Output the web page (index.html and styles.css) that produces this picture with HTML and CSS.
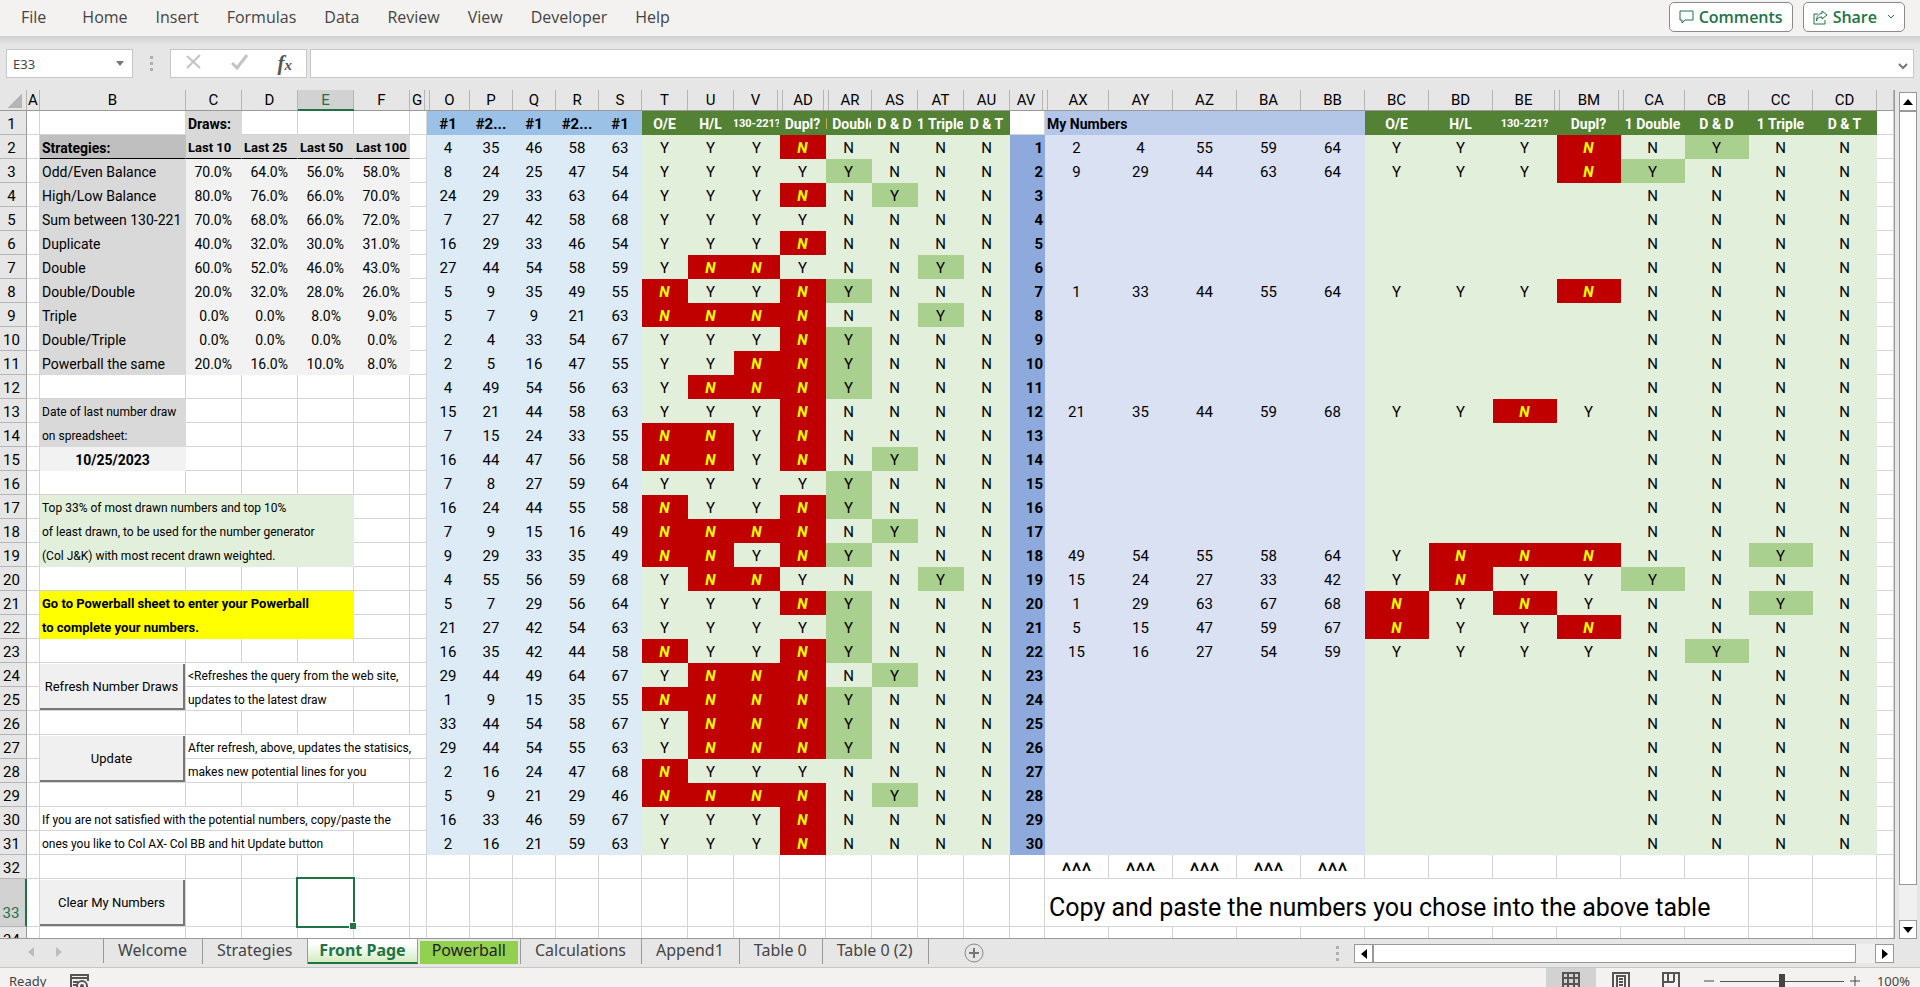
FILE: index.html
```html
<!DOCTYPE html>
<html lang="en">
<head>
  <meta charset="utf-8">
  <title>Front Page</title>
  <link rel="stylesheet" href="styles.css">
</head>
<body>
  <header class="menu-bar">
    <nav class="menu">
      <button class="menu-item menu-file">File</button>
      <button class="menu-item">Home</button>
      <button class="menu-item">Insert</button>
      <button class="menu-item">Formulas</button>
      <button class="menu-item">Data</button>
      <button class="menu-item">Review</button>
      <button class="menu-item">View</button>
      <button class="menu-item">Developer</button>
      <button class="menu-item">Help</button>
    </nav>
    <div class="menu-actions">
      <button class="action-button">
        <svg width="15" height="14" viewBox="0 0 15 14"><path d="M1 1h13v9H6l-3 3v-3H1z"/></svg>
        Comments
      </button>
      <button class="action-button">
        <svg width="15" height="15" viewBox="0 0 15 15"><path d="M5 4H1v10h11V10M9 1l5 4-5 4V7C6 7 4 8 3.500 11 3.500 6 6 3.500 9 3.500z"/></svg>
        Share
        <svg class="share-arrow" width="8" height="6" viewBox="0 0 8 6"><path d="M1 1l3 3 3-3"/></svg>
      </button>
    </div>
  </header>

  <div class="formula-bar">
    <div class="name-box">
      <input type="text" value="E33" aria-label="Name box">
      <button aria-label="Show names"><svg width="8" height="5" viewBox="0 0 8 5"><path d="M0 0h8L4 5z" fill="#777"/></svg></button>
    </div>
    <span class="dots"></span>
    <div class="formula-buttons">
      <button aria-label="Cancel"><svg width="18" height="16" viewBox="0 0 18 16"><path d="M2 2l13 12M15 1L2 14" stroke="#c3c3c3" stroke-width="2" fill="none"/></svg></button>
      <button aria-label="Enter"><svg width="18" height="16" viewBox="0 0 18 16"><path d="M1 9l5 5L16 1" stroke="#c3c3c3" stroke-width="3" fill="none"/></svg></button>
      <button class="fx" aria-label="Insert function"><i>f</i><i class="fx-small">x</i></button>
    </div>
    <div class="formula-input">
      <input type="text" aria-label="Formula bar">
      <button aria-label="Expand formula bar"><svg width="10" height="7" viewBox="0 0 10 7"><path d="M1 1l4 4 4-4" stroke="#777" stroke-width="2" fill="none"/></svg></button>
    </div>
  </div>

  <main class="workspace">
    <div class="sheet">
      <table class="grid" id="grid"></table>
    </div>
    <div class="scroll-v">
      <button class="scroll-button" aria-label="Scroll up"><svg width="10" height="6" viewBox="0 0 10 6"><path d="M5 0l5 6H0z"/></svg></button>
      <div class="scroll-thumb"></div>
      <div class="scroll-space"></div>
      <button class="scroll-button" aria-label="Scroll down"><svg width="10" height="6" viewBox="0 0 10 6"><path d="M0 0h10L5 6z"/></svg></button>
    </div>
  </main>

  <div class="tab-bar">
    <div class="tab-arrows">
      <button aria-label="Previous sheet"><svg width="6" height="10" viewBox="0 0 6 10"><path d="M6 0v10L0 5z" fill="#bdbdbd"/></svg></button>
      <button aria-label="Next sheet"><svg width="6" height="10" viewBox="0 0 6 10"><path d="M0 0v10l6-5z" fill="#bdbdbd"/></svg></button>
    </div>
    <div class="tabs">
      <button class="tab">Welcome</button>
      <button class="tab">Strategies</button>
      <button class="tab tab-active">Front Page</button>
      <button class="tab tab-green"><span>Powerball</span></button>
      <button class="tab">Calculations</button>
      <button class="tab">Append1</button>
      <button class="tab">Table 0</button>
      <button class="tab">Table 0 (2)</button>
    </div>
    <button class="add-sheet" aria-label="New sheet"><svg width="22" height="22" viewBox="0 0 22 22"><circle cx="11" cy="11" r="9" fill="none" stroke="#888"/><path d="M11 6v10M6 11h10" stroke="#777" stroke-width="2"/></svg></button>
    <span class="dots dots-scroll"></span>
    <div class="scroll-h">
      <button class="scroll-button" aria-label="Scroll left"><svg width="6" height="10" viewBox="0 0 6 10"><path d="M6 0v10L0 5z"/></svg></button>
      <div class="scroll-thumb"></div>
      <div class="scroll-space"></div>
      <button class="scroll-button" aria-label="Scroll right"><svg width="6" height="10" viewBox="0 0 6 10"><path d="M0 0v10l6-5z"/></svg></button>
    </div>
  </div>

  <footer class="status-bar">
    <span class="status-ready">Ready</span>
    <svg class="macro-icon" width="19" height="18" viewBox="0 0 19 18"><path d="M1 17V1h17v6M1 4h17M3 8h5M3 11h4M3 14h4" fill="none" stroke="#555" stroke-width="2"/><circle cx="12" cy="12" r="5" fill="#f3f2f1" stroke="#555" stroke-width="2"/><circle cx="12" cy="12" r="2" fill="#555"/></svg>
    <div class="views">
      <button class="view view-active" aria-label="Normal"><svg width="18" height="18" viewBox="0 0 18 18"><path d="M1 1h16v16H1zM6 1v16M12 1v16M1 6h16M1 12h16" fill="none" stroke="#555" stroke-width="2"/></svg></button>
      <button class="view" aria-label="Page layout"><svg width="18" height="18" viewBox="0 0 18 18"><path d="M1 1h16v16H1zM5 4h8v12H5zM7 7h4M7 10h4M7 13h4" fill="none" stroke="#555" stroke-width="2"/></svg></button>
      <button class="view" aria-label="Page break preview"><svg width="18" height="18" viewBox="0 0 18 18"><path d="M1 17V1h16v16M6 1v9M12 1v9M1 10h11" fill="none" stroke="#555" stroke-width="2"/></svg></button>
    </div>
    <div class="zoom">
      <button aria-label="Zoom out"><svg width="10" height="10" viewBox="0 0 10 10"><path d="M0 5h10" stroke="#444"/></svg></button>
      <input type="range" min="10" max="190" value="100" aria-label="Zoom">
      <button aria-label="Zoom in"><svg width="10" height="10" viewBox="0 0 10 10"><path d="M0 5h10M5 0v10" stroke="#444"/></svg></button>
    </div>
    <span class="zoom-value">100%</span>
  </footer>
  <script src="script.js"></script>
</body>
</html>
```

FILE: styles.css
```css
* {
  box-sizing: border-box;
}

body {
  margin: 0;
  height: 100vh;
  display: flex;
  flex-direction: column;
  overflow: hidden;
  background-color: #e6e6e6;
  color: #444;
  font-family: "Noto Sans", sans-serif;
  font-size: 16px;
}

button, input {
  margin: 0;
  padding: 0;
  border: none;
  background: none;
  color: inherit;
  font-family: inherit;
  font-size: inherit;
}

/* Menu bar */
.menu-bar {
  display: flex;
  justify-content: space-between;
  flex: 0 0 36px;
  padding-right: 15px;
  background-color: #f3f2f1;
}

.menu {
  display: flex;
  padding-left: 7px;
}

.menu-item {
  padding: 0 14px 2px;
  font-family: "Open Sans", sans-serif;
}

.menu-file {
  margin-right: 8px;
}

.menu-actions {
  display: flex;
  gap: 10px;
  padding: 2px 0 4px;
}

.action-button {
  display: flex;
  align-items: center;
  gap: 5px;
  padding: 0 9px;
  border: 1px solid #8a8a8a;
  border-radius: 5px;
  background-color: #fff;
  color: #217346;
  font-weight: 600;
  font-family: "Open Sans", sans-serif;
}

.action-button svg {
  fill: none;
  stroke: #217346;
}

.share-arrow {
  margin-left: 5px;
}

/* Formula bar */
.formula-bar {
  display: flex;
  flex: 0 0 53px;
  padding: 13px 6px 12px;
  background: linear-gradient(#cfcfcf, #e6e6e6 9px);
}

.name-box {
  display: flex;
  width: 127px;
  border: 1px solid #c6c6c6;
  background-color: #fff;
}

.name-box input {
  flex: 1;
  min-width: 0;
  padding-left: 6px;
  font-size: 13px;
}

.name-box button {
  display: flex;
  align-items: center;
  padding: 0 8px;
}

.dots {
  width: 3px;
  height: 15px;
  margin: 7px 17px;
  background: repeating-linear-gradient(#b0b0b0 0 3px, transparent 3px 6px);
}

.formula-buttons {
  display: flex;
  justify-content: space-around;
  align-items: center;
  width: 137px;
  border: 1px solid #c6c6c6;
  background-color: #fff;
}

.fx {
  color: #555;
  font-family: "Liberation Serif", serif;
  font-size: 21px;
  font-weight: bold;
  line-height: 20px;
}

.fx-small {
  font-size: 15px;
}

.formula-input {
  display: flex;
  flex: 1;
  margin-left: 3px;
  border: 1px solid #c6c6c6;
  background-color: #fff;
}

.formula-input input {
  flex: 1;
}

.formula-input button {
  padding: 0 5px;
}

/* Sheet */
.workspace {
  display: flex;
  flex: 1;
  min-height: 0;
}

.sheet {
  flex: 1;
  overflow: hidden;
  border-right: 1px solid #999;
  border-bottom: 1px solid #999;
}

.grid {
  width: 100%;
  table-layout: fixed;
  border-collapse: separate;
  border-spacing: 0;
  background-color: #fff;
  color: #000;
  font-family: Roboto, "Liberation Sans", sans-serif;
  font-size: 15px;
  line-height: 18px;
}

.grid th, .grid td {
  height: 24px;
  padding: 2px 2px 0;
  border-right: 1px solid #d4d4d4;
  border-bottom: 1px solid #d4d4d4;
  text-align: left;
  font-weight: normal;
  white-space: nowrap;
}

.grid td {
  font-size: 14px;
}

.grid thead th {
  height: 21px;
  padding: 0;
  border-right: none;
  border-bottom: 1px solid #999;
  background-color: #e6e6e6;
  text-align: center;
}

.grid thead div {
  height: 20px;
  padding-top: 1px;
  border-right: 1px solid #b5b5b5;
}

.grid thead .before-hidden div {
  margin-right: 2px;
}

.grid thead .after-hidden div {
  margin-left: 2px;
  border-left: 1px solid #b5b5b5;
}

.grid thead .corner div {
  background: linear-gradient(135deg, transparent 50%, #b5b5b5 50%) 8px 4px / 14px 14px no-repeat;
}

.grid thead .selected {
  border-bottom: 2px solid #217346;
  background-color: #d2d2d2;
  color: #217346;
}

.grid thead .selected div {
  height: 19px;
}

.grid tbody th {
  padding: 2px 3px 0 0;
  border-right-color: #999;
  border-bottom-color: #b5b5b5;
  background-color: #e6e6e6;
  text-align: center;
}

.grid tbody .selected {
  border-right: 2px solid #217346;
  background-color: #d2d2d2;
  color: #217346;
}

.grid .tall th, .grid .tall td {
  height: 48px;
  padding-bottom: 4px;
  vertical-align: bottom;
}

.grid .fill {
  border-color: transparent;
}

.grid .center, .grid .pick, .grid .check, .grid .bad, .grid .good, .grid .green-head, .grid .blue-head, .grid .mine {
  font-size: 15px;
  text-align: center;
}

.grid .bold, .grid .blue-head, .grid .green-head {
  font-weight: bold;
}

/* sentences that run over several columns */
.grid .note {
  font-size: 12px;
}

.grid .loud {
  font-size: 13px;
}

.grid .tight {
  padding-right: 0;
  font-size: 13px;
}

.grid .percent {
  padding-right: 9px;
  background-color: #f2f2f2;
  text-align: right;
}

.grid .percent-short {
  padding-right: 12px;
}

.grid .gray {
  background-color: #d9d9d9;
}

.grid .dark-gray {
  background-color: #bfbfbf;
}

.grid .light-gray {
  background-color: #f2f2f2;
}

.grid .date {
  font-size: 14px;
}

.grid .underlined {
  border-bottom: 1px solid #000;
}

.grid .yellow {
  background-color: #ff0;
}

.grid .green-note {
  background-color: #e2efda;
}

.grid .blue-head {
  background-color: #9bc2e6;
}

.grid .pick {
  background-color: #ddebf7;
}

.grid .green-head {
  padding-left: 0;
  padding-right: 0;
  background-color: #548235;
  color: #fff;
  font-size: 14px;
}

.green-head div {
  display: flex;
  justify-content: center;
  overflow: hidden;
}

.grid .small-head {
  font-size: 11px;
}

.grid .check {
  background-color: #e2efda;
}

.grid .bad {
  background-color: #c00000;
  color: #ff0;
  font-weight: bold;
  font-style: italic;
}

.grid .good {
  background-color: #a9d08e;
}

.grid .line-number {
  padding-right: 1px;
  background-color: #8ea9db;
  text-align: right;
  font-size: 15px;
  font-weight: bold;
}

.grid .mine-head {
  background-color: #b4c6e7;
}

.grid .mine {
  background-color: #d9e1f2;
}

.grid .carets {
  padding-top: 11px;
  font-size: 24px;
  line-height: 12px;
}

.grid .tall .big-text {
  padding: 0 0 2px 4px;
  font-size: 25px;
  line-height: 32px;
}

.grid .button-cell, .grid .tall .button-cell {
  padding: 1px 0 0;
  vertical-align: top;
}

.sheet-button {
  display: block;
  width: 100%;
  height: 46px;
  border-right: 2px solid #777;
  border-bottom: 2px solid #777;
  background-color: #f0f0f0;
  font-size: 13px;
}

.grid .cursor {
  position: relative;
}

/* Selection frame and its fill handle */
.cursor::before {
  content: "";
  position: absolute;
  inset: -2px;
  border: 2px solid #217346;
}

.cursor::after {
  content: "";
  position: absolute;
  right: -3px;
  bottom: -3px;
  width: 6px;
  height: 6px;
  border: 1px solid #fff;
  border-right: none;
  border-bottom: none;
  background-color: #217346;
}

/* Scroll bars */
.scroll-v {
  display: flex;
  flex-direction: column;
  width: 25px;
  padding: 2px 3px 0 4px;
}

.scroll-h {
  display: flex;
  width: 540px;
  height: 19px;
}

.scroll-button {
  display: flex;
  align-items: center;
  justify-content: center;
  flex: 0 0 19px;
  border: 1px solid #999;
  background-color: #fff;
}

.scroll-thumb {
  flex: 26;
  border: 1px solid #999;
  background-color: #fff;
}

.scroll-space {
  flex: 1;
  background-color: #f0f0f0;
}

.scroll-v .scroll-thumb {
  flex: 22;
}

.scroll-v .scroll-space {
  flex: 1;
}

/* Sheet tabs */
.tab-bar {
  display: flex;
  flex: 0 0 29px;
  padding-right: 26px;
  border-bottom: 1px solid #c6c6c6;
}

.tab-arrows {
  display: flex;
  gap: 22px;
  width: 104px;
  padding-left: 28px;
  border-right: 1px solid #999;
  margin-bottom: 4px;
}

.tabs {
  display: flex;
  height: 25px;
}

.tab {
  padding: 0 15px 3px 14px;
  border-right: 1px solid #999;
  line-height: 20px;
}

.tab-active {
  padding: 0 11px 2px;
  border-bottom: 2px solid #217346;
  background: linear-gradient(#fff 20%, #d3ecc0);
  color: #217346;
  font-weight: bold;
}

.tab-green {
  padding: 2px 2px 0;
  color: #222;
}

.tab-green span {
  display: block;
  height: 23px;
  padding: 0 12px;
  background-color: #92d050;
  line-height: 18px;
}

.add-sheet {
  display: flex;
  align-items: center;
  margin-left: 34px;
}

.dots-scroll {
  margin: 7px 15px 0 auto;
}

.scroll-h {
  margin-top: 5px;
}

/* Status bar */
.status-bar {
  display: flex;
  flex: 0 0 19px;
  padding: 0 10px 0 9px;
  overflow: hidden;
  background-color: #f3f2f1;
  font-size: 13px;
  line-height: 26px;
}

.macro-icon {
  margin: 6px 0 0 24px;
}

.views {
  display: flex;
  margin-left: auto;
}

.view {
  width: 50px;
  height: 30px;
}

.view-active {
  background-color: #d2d2d2;
}

.zoom {
  display: flex;
  align-items: center;
  gap: 6px;
  height: 26px;
  margin: 0 17px 0 8px;
}

.zoom button {
  display: flex;
}

.zoom input {
  width: 124px;
  height: 14px;
  appearance: none;
  background: linear-gradient(#555, #555) center / 100% 1px no-repeat;
}

.zoom input::-webkit-slider-thumb {
  appearance: none;
  width: 6px;
  height: 14px;
  background-color: #444;
}
```

FILE: script.js
```js
const columns = [
  ['A', 13], ['B', 146], ['C', 56], ['D', 56], ['E', 56], ['F', 56], ['G', 17],
  ['O', 43], ['P', 43], ['Q', 43], ['R', 43], ['S', 43],
  ['T', 46], ['U', 46], ['V', 46], ['AD', 46], ['AR', 46], ['AS', 46], ['AT', 46], ['AU', 46],
  ['AV', 35], ['AX', 64], ['AY', 64], ['AZ', 64], ['BA', 64], ['BB', 64],
  ['BC', 64], ['BD', 64], ['BE', 64], ['BM', 64], ['CA', 64], ['CB', 64], ['CC', 64], ['CD', 64], ['', 17]
];

// columns that have hidden columns to their right
const beforeHidden = ['G', 'V', 'AD', 'AV', 'BE', 'BM'];

const strategies = [
  ['Odd/Even Balance', '70.0%', '64.0%', '56.0%', '58.0%'],
  ['High/Low Balance', '80.0%', '76.0%', '66.0%', '70.0%'],
  ['Sum between 130-221', '70.0%', '68.0%', '66.0%', '72.0%'],
  ['Duplicate', '40.0%', '32.0%', '30.0%', '31.0%'],
  ['Double', '60.0%', '52.0%', '46.0%', '43.0%'],
  ['Double/Double', '20.0%', '32.0%', '28.0%', '26.0%'],
  ['Triple', '0.0%', '0.0%', '8.0%', '9.0%'],
  ['Double/Triple', '0.0%', '0.0%', '0.0%', '0.0%'],
  ['Powerball the same', '20.0%', '16.0%', '10.0%', '8.0%']
];

const draws = [
  '4 35 46 58 63 YYYNNNNN', '8 24 25 47 54 YYYYYNNN', '24 29 33 63 64 YYYNNYNN',
  '7 27 42 58 68 YYYYNNNN', '16 29 33 46 54 YYYNNNNN', '27 44 54 58 59 YNNYNNYN',
  '5 9 35 49 55 NYYNYNNN', '5 7 9 21 63 NNNNNNYN', '2 4 33 54 67 YYYNYNNN',
  '2 5 16 47 55 YYNNYNNN', '4 49 54 56 63 YNNNYNNN', '15 21 44 58 63 YYYNNNNN',
  '7 15 24 33 55 NNYNNNNN', '16 44 47 56 58 NNYNNYNN', '7 8 27 59 64 YYYYYNNN',
  '16 24 44 55 58 NYYNYNNN', '7 9 15 16 49 NNNNNYNN', '9 29 33 35 49 NNYNYNNN',
  '4 55 56 59 68 YNNYNNYN', '5 7 29 56 64 YYYNYNNN', '21 27 42 54 63 YYYYYNNN',
  '16 35 42 44 58 NYYNYNNN', '29 44 49 64 67 YNNNNYNN', '1 9 15 35 55 NNNNYNNN',
  '33 44 54 58 67 YNNNYNNN', '29 44 54 55 63 YNNNYNNN', '2 16 24 47 68 NYYYNNNN',
  '5 9 21 29 46 NNNNNYNN', '16 33 46 59 67 YYYNNNNN', '2 16 21 59 63 YYYNNNNN'
];

const myNumbers = {
  1: '2 4 55 59 64 YYYNNYNN',
  2: '9 29 44 63 64 YYYNYNNN',
  7: '1 33 44 55 64 YYYNNNNN',
  12: '21 35 44 59 68 YYNYNNNN',
  18: '49 54 55 58 64 YNNNNNYN',
  19: '15 24 27 33 42 YNYYYNNN',
  20: '1 29 63 67 68 NYNYNNYN',
  21: '5 15 47 59 67 NYYNNNNN',
  22: '15 16 27 54 59 YYYYNYNN'
};

const checkNames = ['O/E', 'H/L', '130-221?', 'Dupl?', '1 Double', 'D &amp; D', '1 Triple', 'D &amp; T'];

const cells = {};

function put(column, row, text, style, span, rows) {
  cells[column + row] = { text, style, span: span || 1, rows: rows || 1 };
}

function putChecks(first, row, checks) {
  checks.forEach((value, i) => {
    let style = 'fill check';
    if (i < 4 && value === 'N') style = 'fill bad';
    if (i > 3 && value === 'Y') style = 'fill good';
    put(columns[first + i][0], row, value, style);
  });
}

// left panel
put('C', 1, 'Draws:', 'fill bold gray');
put('B', 2, 'Strategies:', 'fill bold dark-gray underlined');
['Last 10', 'Last 25', 'Last 50', 'Last 100'].forEach((name, i) => {
  put('CDEF'[i], 2, name, 'fill bold gray underlined tight');
});
strategies.forEach((line, i) => {
  put('B', i + 3, line[0], 'fill gray');
  line.slice(1).forEach((value, j) => {
    put('CDEF'[j], i + 3, value, 'fill percent' + (value.length < 5 ? ' percent-short' : ''));
  });
});
put('B', 13, 'Date of last number draw', 'fill gray note');
put('B', 14, 'on spreadsheet:', 'fill gray note');
put('B', 15, '10/25/2023', 'fill light-gray bold center date');
put('B', 17, 'Top 33% of most drawn numbers and top 10%', 'fill green-note note', 4);
put('B', 18, 'of least drawn, to be used for the number generator', 'fill green-note note', 4);
put('B', 19, '(Col J&amp;K) with most recent drawn weighted.', 'fill green-note note', 4);
put('B', 21, 'Go to Powerball sheet to enter your Powerball', 'fill yellow bold loud', 4);
put('B', 22, 'to complete your numbers.', 'fill yellow bold loud', 4);
put('B', 24, '<button class="sheet-button">Refresh Number Draws</button>', 'button-cell', 1, 2);
put('C', 24, '&lt;Refreshes the query from the web site,', 'note', 4);
put('C', 25, 'updates to the latest draw', 'note', 3);
put('B', 27, '<button class="sheet-button">Update</button>', 'button-cell', 1, 2);
put('C', 27, 'After refresh, above, updates the statisics,', 'note', 5);
put('C', 28, 'makes new potential lines for you', 'note', 4);
put('B', 30, 'If you are not satisfied with the potential numbers, copy/paste the', 'note', 5);
put('B', 31, 'ones you like to Col AX- Col BB and hit Update button', 'note', 4);
put('B', 33, '<button class="sheet-button">Clear My Numbers</button>', 'button-cell');
put('E', 33, '', 'cursor');

// draws and checks
['#1', '#2...', '#1', '#2...', '#1'].forEach((name, i) => {
  put('OPQRS'[i], 1, name, 'fill blue-head');
});
checkNames.forEach((name, i) => {
  const style = 'fill green-head' + (i === 2 ? ' small-head' : '');
  put(columns[12 + i][0], 1, '<div>' + name + '</div>', style);
  put(columns[26 + i][0], 1, '<div>' + name + '</div>', style);
});
put('AX', 1, 'My Numbers', 'fill mine-head bold', 5);
draws.forEach((line, i) => {
  const row = i + 2;
  const parts = line.split(' ');
  const mine = (myNumbers[i + 1] || '').split(' ');
  for (let j = 0; j < 5; j++) {
    put(columns[7 + j][0], row, parts[j], 'fill pick');
    put(columns[21 + j][0], row, mine[j] || '', 'fill mine');
  }
  putChecks(12, row, parts[5].split(''));
  put('AV', row, i + 1, 'fill line-number');
  putChecks(26, row, mine[5] ? mine[5].split('') : ['', '', '', '', 'N', 'N', 'N', 'N']);
});
['AX', 'AY', 'AZ', 'BA', 'BB'].forEach(name => put(name, 32, '^^^', 'center carets'));
put('AX', 33, 'Copy and paste the numbers you chose into the above table', 'big-text', 11);

let html = '<colgroup><col style="width:27px">';
columns.forEach(c => { html += `<col style="width:${c[1]}px">`; });
html += '</colgroup><thead><tr><th class="corner"><div></div></th>';
columns.forEach((c, i) => {
  let style = '';
  if (beforeHidden.includes(c[0])) style += ' before-hidden';
  if (i && beforeHidden.includes(columns[i - 1][0])) style += ' after-hidden';
  if (c[0] === 'E') style += ' selected';
  html += `<th scope="col" class="${style}"><div>${c[0]}</div></th>`;
});
html += '</tr></thead><tbody>';

const covered = {};
for (let row = 1; row <= 34; row++) {
  html += row === 33 ? '<tr class="tall">' : '<tr>';
  html += `<th scope="row"${row === 33 ? ' class="selected"' : ''}>${row}</th>`;
  for (let i = 0; i < columns.length; i++) {
    const name = columns[i][0];
    if (covered[name + row]) continue;
    const cell = cells[name + row];
    if (!cell) {
      html += '<td></td>';
      continue;
    }
    if (cell.rows > 1) covered[name + (row + 1)] = true;
    html += `<td class="${cell.style}" colspan="${cell.span}" rowspan="${cell.rows}">${cell.text}</td>`;
    i += cell.span - 1;
  }
  html += '</tr>';
}
document.getElementById('grid').innerHTML = html + '</tbody>';
```
